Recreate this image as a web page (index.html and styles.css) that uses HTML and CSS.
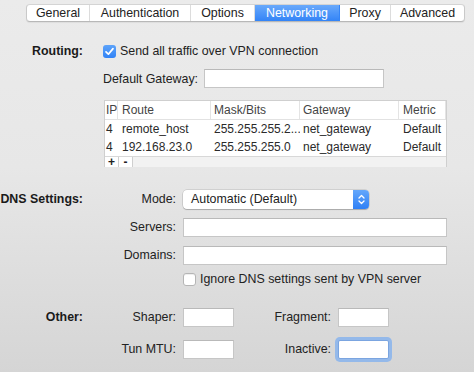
FILE: index.html
```html
<!DOCTYPE html>
<html>
<head>
<meta charset="utf-8">
<link rel="stylesheet" href="styles.css">
</head>
<body>
<div class="window">
  <div class="tabs">
    <div class="tab t-general">General</div>
    <div class="tab t-auth">Authentication</div>
    <div class="tab t-options">Options</div>
    <div class="tab t-net active">Networking</div>
    <div class="tab t-proxy">Proxy</div>
    <div class="tab t-adv">Advanced</div>
  </div>

  <div class="row r-routing">
    <div class="sec">Routing:</div>
    <div class="check on indent">
      <svg width="13" height="13" viewBox="0 0 13 13"><path d="M3 6.8 L5.4 9.2 L10 3.6" fill="none" stroke="#fff" stroke-width="1.7" stroke-linecap="round" stroke-linejoin="round"/></svg>
    </div>
    <span class="ctext">Send all traffic over VPN connection</span>
  </div>

  <div class="row r-gw">
    <div class="sec"></div>
    <span class="gwlabel">Default Gateway:</span>
    <div class="input w-gw"></div>
  </div>

  <div class="table">
    <div class="trow thead">
      <div class="c c-ip">IP</div>
      <div class="c c-route">Route</div>
      <div class="c c-mask">Mask/Bits</div>
      <div class="c c-gw">Gateway</div>
      <div class="c c-metric">Metric</div>
    </div>
    <div class="trow">
      <div class="c c-ip">4</div>
      <div class="c c-route">remote_host</div>
      <div class="c c-mask">255.255.255.2...</div>
      <div class="c c-gw">net_gateway</div>
      <div class="c c-metric">Default</div>
    </div>
    <div class="trow">
      <div class="c c-ip">4</div>
      <div class="c c-route">192.168.23.0</div>
      <div class="c c-mask">255.255.255.0</div>
      <div class="c c-gw">net_gateway</div>
      <div class="c c-metric">Default</div>
    </div>
    <div class="tbar">
      <div class="tbtn">+</div>
      <div class="tbtn">-</div>
    </div>
  </div>

  <div class="row r-dns">
    <div class="sec">DNS Settings:</div>
    <div class="sub">Mode:</div>
    <div class="select">
      <span>Automatic (Default)</span>
      <div class="stepper">
        <svg width="9" height="13" viewBox="0 0 9 13"><path d="M2 5 L4.5 2.5 L7 5 M2 8 L4.5 10.5 L7 8" fill="none" stroke="#fff" stroke-width="1.3" stroke-linecap="round" stroke-linejoin="round"/></svg>
      </div>
    </div>
  </div>

  <div class="row r-servers">
    <div class="sec"></div>
    <div class="sub">Servers:</div>
    <div class="input w-long"></div>
  </div>

  <div class="row r-domains">
    <div class="sec"></div>
    <div class="sub">Domains:</div>
    <div class="input w-long"></div>
  </div>

  <div class="row r-ignore">
    <div class="sec"></div>
    <div class="sub"></div>
    <div class="check off"></div>
    <span class="ctext">Ignore DNS settings sent by VPN server</span>
  </div>

  <div class="row r-other">
    <div class="sec">Other:</div>
    <div class="sub">Shaper:</div>
    <div class="input w-small"></div>
    <div class="sub2">Fragment:</div>
    <div class="input w-small"></div>
  </div>

  <div class="row r-mtu">
    <div class="sec"></div>
    <div class="sub">Tun MTU:</div>
    <div class="input w-small"></div>
    <div class="sub2">Inactive:</div>
    <div class="input w-small focus"></div>
  </div>
</div>
</body>
</html>
```

FILE: styles.css
```css
html, body {
  margin: 0;
  padding: 0;
}
body {
  width: 474px;
  height: 372px;
  overflow: hidden;
  font-family: "Liberation Sans", Arial, sans-serif;
  font-size: 12.4px;
  color: #222;
}
.window {
  height: 372px;
  background: linear-gradient(#ebebeb 0%, #e7e7e7 45%, #dadada 85%, #d5d5d5 100%);
  padding-top: 4px;
  box-sizing: border-box;
}
.tabs {
  display: flex;
  margin-left: 26px;
  height: 18px;
  width: 439px;
  background: #fff;
  border: 1px solid #c9c9c9;
  border-top-color: #d4d4d4;
  border-bottom-color: #b8b8b8;
  border-radius: 4px;
  box-sizing: border-box;
  overflow: hidden;
  box-shadow: 0 1px 1px rgba(0,0,0,0.06);
}
.tab {
  display: flex;
  align-items: center;
  justify-content: center;
  height: 100%;
  border-right: 1px solid #dcdcdc;
  box-sizing: border-box;
  color: #222;
}
.tab:last-child { border-right: none; }
.t-general { width: 63px; }
.t-auth { width: 101px; }
.t-options { width: 64px; }
.t-net { width: 85px; }
.t-proxy { width: 51px; }
.t-adv { width: 73px; }
.tab.active {
  background: linear-gradient(#69a9fb, #3384f7);
  color: #fff;
  border-right-color: #3384f7;
}
.row {
  display: flex;
  align-items: center;
  height: 20px;
}
.sec {
  width: 83px;
  flex: none;
  display: flex;
  justify-content: flex-end;
  white-space: nowrap;
  font-weight: bold;
  color: #1a1a1a;
}
.sub {
  width: 93px;
  flex: none;
  text-align: right;
  margin-right: 7px;
  white-space: nowrap;
}
.sub2 {
  width: 97px;
  flex: none;
  text-align: right;
  margin-right: 7px;
  white-space: nowrap;
}
.r-routing { margin-top: 19px; }
.r-gw { margin-top: 8px; height: 19px; }
.indent { margin-left: 20px; }
.check {
  width: 13px;
  height: 13px;
  flex: none;
  border-radius: 3px;
  box-sizing: border-box;
  display: flex;
}
.check.on {
  background: linear-gradient(#5da3fa, #3183f6);
  border: none;
}
.check.off {
  background: #fff;
  border: 1px solid #b5b5b5;
  box-shadow: inset 0 1px 0 #eee;
}
.ctext { margin-left: 4px; white-space: nowrap; }
.gwlabel { margin-left: 20px; width: 101px; flex: none; white-space: nowrap; }
.input {
  height: 19px;
  background: #fff;
  border: 1px solid #c6c6c6;
  border-top-color: #b9b9b9;
  box-sizing: border-box;
  flex: none;
}
.w-gw { width: 180px; }
.w-long { width: 264px; }
.w-small { width: 51px; }
.input.focus {
  box-shadow: 0 0 0 3px #94b9ea;
  border-color: #7ba5e0;
  border-radius: 2px;
}
.table {
  margin: 12px 0 0 104px;
  width: 343px;
  height: 67px;
  border: 1px solid #cfcfcf;
  box-sizing: border-box;
  background: #fff;
  display: flex;
  flex-direction: column;
  color: #2a2a2a;
  font-size: 12px;
}
.trow {
  display: flex;
  height: 18px;
  align-items: center;
  flex: none;
}
.thead {
  height: 19px;
  border-bottom: 1px solid #e2e2e2;
  box-sizing: border-box;
  color: #444;
}
.c {
  height: 100%;
  display: flex;
  align-items: center;
  padding-left: 4px;
  box-sizing: border-box;
  white-space: nowrap;
  overflow: hidden;
}
.thead .c { border-right: 1px solid #e4e4e4; }
.c-ip { width: 13px; padding-left: 1px; }
.c-route { width: 93px; padding-left: 4px; }
.c-mask { width: 89px; padding-left: 3px; }
.c-gw { width: 99px; padding-left: 3px; }
.c-metric { width: 47px; }
.tbar {
  margin-top: auto;
  height: 10px;
  display: flex;
  background: #f2f2f2;
  border-top: 1px solid #d8d8d8;
  box-sizing: content-box;
}
.tbtn {
  width: 13px;
  height: 10px;
  background: #fff;
  border-right: 1px solid #cfcfcf;
  display: flex;
  align-items: center;
  justify-content: center;
  font-weight: bold;
  font-size: 12px;
  line-height: 10px;
  color: #222;
}
.r-dns { margin-top: 22px; }
.select {
  width: 186px;
  height: 19px;
  background: #fff;
  border-radius: 4px;
  box-shadow: 0 0 0 0.5px rgba(0,0,0,0.18), 0 1px 1px rgba(0,0,0,0.18);
  display: flex;
  align-items: center;
  justify-content: space-between;
  padding-left: 8px;
  box-sizing: border-box;
  flex: none;
}
.stepper {
  width: 16px;
  height: 19px;
  border-radius: 0 4px 4px 0;
  background: linear-gradient(#64a7fb, #2f80f5);
  display: flex;
  align-items: center;
  justify-content: center;
}
.r-servers { margin-top: 8px; }
.r-domains { margin-top: 8px; }
.r-ignore { margin-top: 6px; height: 16px; }
.r-other { margin-top: 20px; }
.r-mtu { margin-top: 12px; }
```
